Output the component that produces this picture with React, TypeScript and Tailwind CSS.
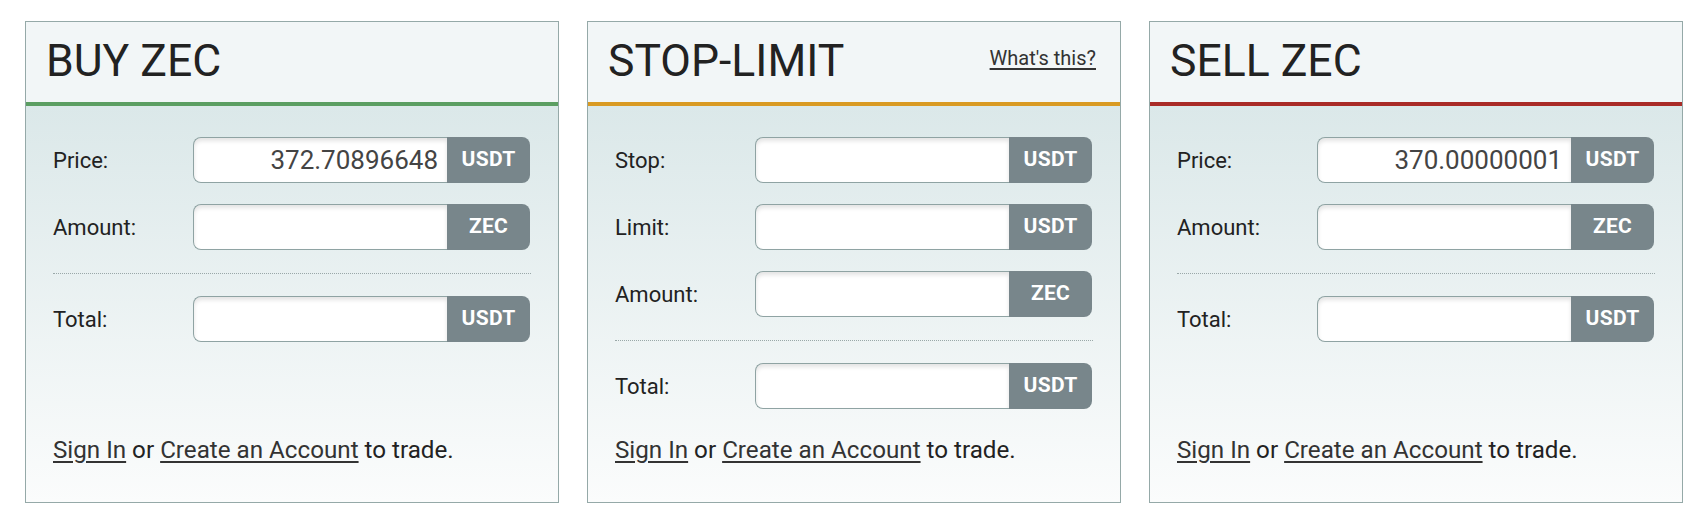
import React from "react";

type Row = { label: string; unit: string; value?: string };

type PanelProps = {
    title: string;
    accent: string;
    rows: Row[];
    total: Row;
    help?: boolean;
};

function Field({ label, unit, value }: Row) {
    return (
        <div className="flex items-center h-[46px]">
            <div className="w-[140px] text-[22px] text-[#222]">{label}</div>
            <div className="flex w-[337px] h-[46px]">
                <div className="flex-1 flex items-center justify-end pr-[9px] bg-white border border-r-0 border-[#8fa3a3] rounded-l-[8px] shadow-[inset_0_3px_4px_rgba(0,0,0,0.11)] text-[26px] text-[#444]">
                    {value}
                </div>
                <div className="w-[83px] flex items-center justify-center bg-[#78868b] rounded-r-[8px] text-white font-bold text-[21px] tracking-[0.3px]">
                    {unit}
                </div>
            </div>
        </div>
    );
}

function Panel({ title, accent, rows, total, help }: PanelProps) {
    return (
        <div className="w-[534px] h-[482px] flex flex-col border border-[#95a9a8]">
            {/* header */}
            <div className={`h-[84px] flex items-start justify-between px-[20px] pt-[17px] bg-[#f2f6f7] border-b-4 ${accent}`}>
                <h2 className="text-[44.5px] leading-[44px] text-[#222]">{title}</h2>
                {help && (
                    <a className="mt-[7px] mr-[4px] text-[20px] leading-[24px] text-[#333] underline underline-offset-[3px]">
                        What's this?
                    </a>
                )}
            </div>

            {/* body */}
            <div className="flex-1 flex flex-col pl-[27px] pt-[31px] bg-linear-to-b from-[#dbe8e9] to-[#fbfcfc]">
                <div className="flex flex-col gap-[21px]">
                    {rows.map((r) => (
                        <Field key={r.label} {...r} />
                    ))}
                </div>
                <div className="w-[478px] mt-[23px] border-t border-dotted border-[#9aa8a8]" />
                <div className="mt-[22px]">
                    <Field {...total} />
                </div>
                <p className="mt-auto pb-[38px] text-[24.2px] leading-[28px] text-[#222]">
                    <a className="underline underline-offset-[3px] text-[#333]">Sign In</a> or{" "}
                    <a className="underline underline-offset-[3px] text-[#333]">Create an Account</a> to trade.
                </p>
            </div>
        </div>
    );
}

export default function App() {
    return (
        <div className="min-h-[532px] bg-white font-['Roboto',sans-serif] flex gap-[28px] pl-[25px] pt-[21px]">
            <Panel
                title="BUY ZEC"
                accent="border-[#5b9e62]"
                rows={[
                    { label: "Price:", unit: "USDT", value: "372.70896648" },
                    { label: "Amount:", unit: "ZEC" },
                ]}
                total={{ label: "Total:", unit: "USDT" }}
            />
            <Panel
                title="STOP-LIMIT"
                accent="border-[#d99a22]"
                help
                rows={[
                    { label: "Stop:", unit: "USDT" },
                    { label: "Limit:", unit: "USDT" },
                    { label: "Amount:", unit: "ZEC" },
                ]}
                total={{ label: "Total:", unit: "USDT" }}
            />
            <Panel
                title="SELL ZEC"
                accent="border-[#a92b27]"
                rows={[
                    { label: "Price:", unit: "USDT", value: "370.00000001" },
                    { label: "Amount:", unit: "ZEC" },
                ]}
                total={{ label: "Total:", unit: "USDT" }}
            />
        </div>
    );
}
